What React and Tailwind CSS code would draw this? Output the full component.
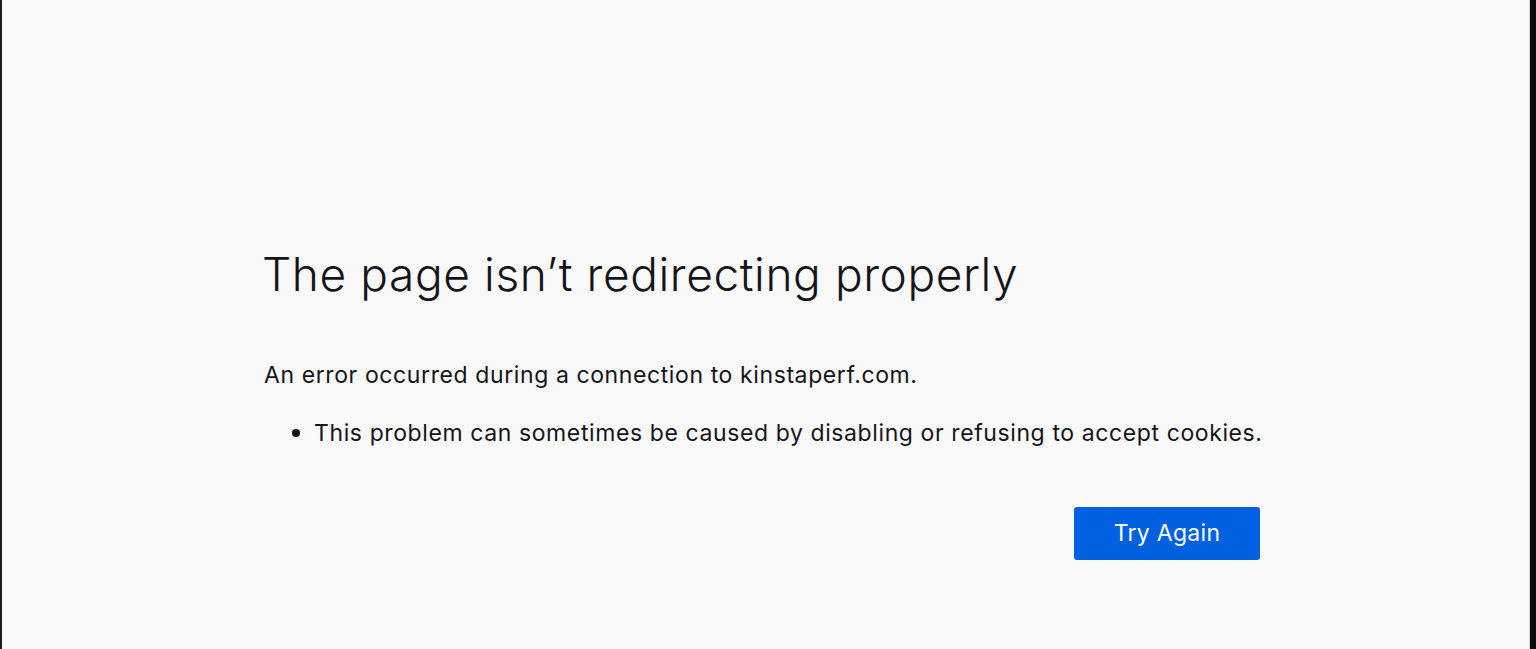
import React from 'react';

export default function App() {
  return (
    <div className="h-[649px] w-full flex bg-[#0c0c0d] overflow-hidden" style={{ fontFamily: '"Inter", "Liberation Sans", sans-serif' }}>
      <div className="w-[2px] shrink-0 bg-[#1a1a1a]" />
      <div className="flex-1 bg-[#f9f9fa] border-r border-[#d8d8d8]">
        <div className="ml-[260px] mt-[244px] w-[998px] flex flex-col text-[#15141a]">
          <h1 className="text-[46px] leading-[60px] font-light tracking-[0.6px] whitespace-nowrap">
            The page isn’t redirecting properly
          </h1>
          <p className="mt-[56px] text-[23px] leading-[30px] ml-[2px] tracking-[0.6px] whitespace-nowrap">
            An error occurred during a connection to kinstaperf.com.
          </p>
          <ul className="mt-[28px] ml-[30px] text-[23px] leading-[30px] tracking-[0.6px]">
            <li className="flex items-center gap-[14px] whitespace-nowrap">
              <span className="w-[8px] h-[8px] rounded-full bg-[#15141a] shrink-0" />
              <span>This problem can sometimes be caused by disabling or refusing to accept cookies.</span>
            </li>
          </ul>
          <button className="self-end mt-[59px] w-[186px] h-[53px] rounded-[3px] bg-[#0061e0] text-white text-[23px] tracking-[0.3px]">
            Try Again
          </button>
        </div>
      </div>
      <div className="w-[6px] shrink-0 bg-[#0c0c0d]" />
    </div>
  );
}
